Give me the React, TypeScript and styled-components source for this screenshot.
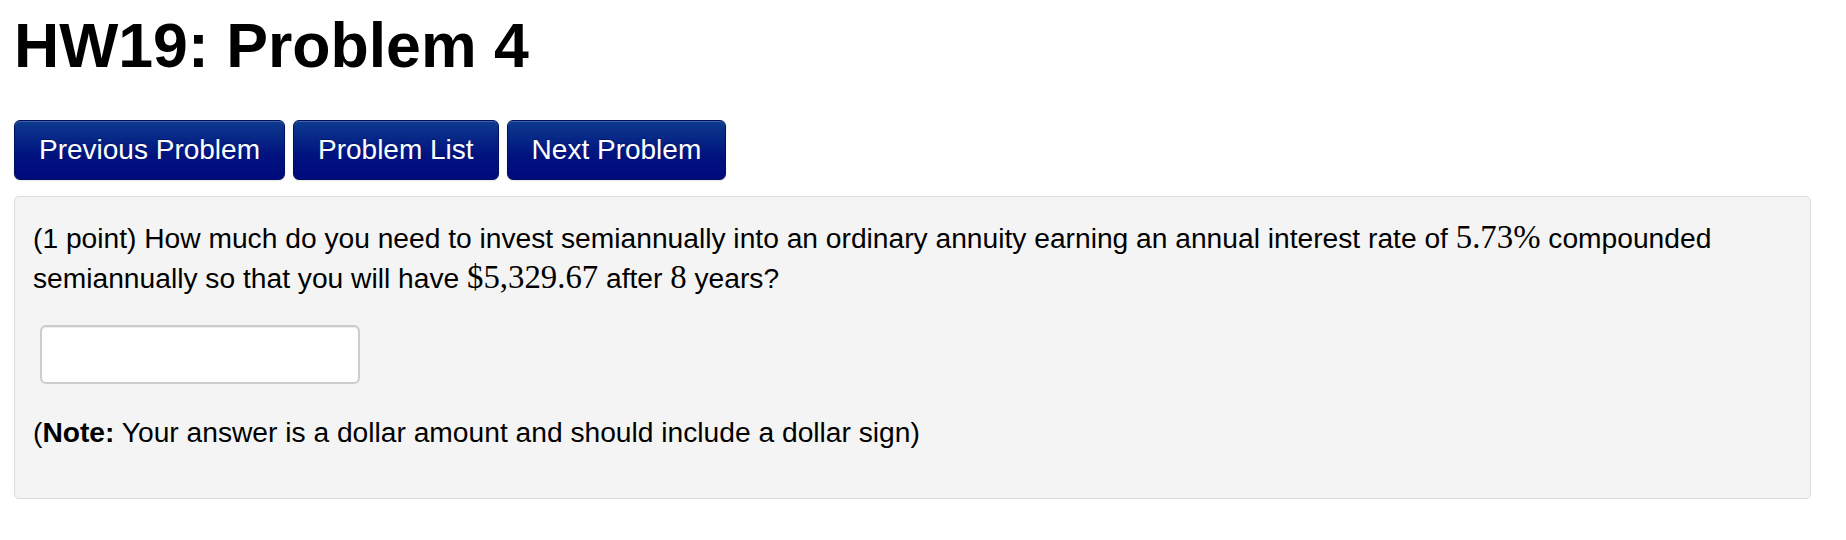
import React from 'react'
import styled, { createGlobalStyle } from 'styled-components'

const GlobalStyle = createGlobalStyle`
  html, body {
    margin: 0;
    padding: 0;
    background: #fff;
  }
  body {
    font-family: "Liberation Sans", Arial, Helvetica, sans-serif;
    color: #000;
  }
`

const App = () => {
  return (
    <>
      <GlobalStyle />
      <Page>
        <Title>HW19: Problem 4</Title>
        <NavBar>
          <NavButton type="button">Previous Problem</NavButton>
          <NavButton type="button">Problem List</NavButton>
          <NavButton type="button">Next Problem</NavButton>
        </NavBar>
        <ProblemBox>
          <Question>
            (1 point) How much do you need to invest semiannually into an ordinary annuity
            earning an annual interest rate of <MathText>5.73%</MathText> compounded
            semiannually so that you will have <MathText>$5,329.67</MathText> after{' '}
            <MathText>8</MathText> years?
          </Question>
          <AnswerInput type="text" />
          <Note>
            (<b>Note:</b> Your answer is a dollar amount and should include a dollar sign)
          </Note>
        </ProblemBox>
      </Page>
    </>
  )
}

export default App

const Page = styled.div`
  padding: 10px 35px 40px 14px;
`

const Title = styled.h1`
  margin: 0;
  font-family: "Liberation Sans", Arial, sans-serif;
  font-weight: 700;
  font-size: 62.6px;
  line-height: 71px;
`

const NavBar = styled.div`
  display: flex;
  gap: 8px;
  margin-top: 39px;
`

const NavButton = styled.button`
  height: 60px;
  padding: 0 24px;
  border: 1px solid #00105e;
  border-radius: 6px;
  background: linear-gradient(to bottom, #0d3b8e 0%, #00127f 60%, #000a7c 100%);
  box-shadow: inset 0 1px 0 rgba(255, 255, 255, 0.2), 0 1px 2px rgba(0, 0, 0, 0.1);
  color: #fff;
  font-family: "Liberation Sans", Arial, sans-serif;
  font-size: 28px;
  text-shadow: 0 -1px 0 rgba(0, 0, 0, 0.25);
  cursor: pointer;
`

const ProblemBox = styled.div`
  margin-top: 16px;
  padding: 21px 18px 46px 18px;
  background: #f4f4f4;
  border: 1px solid #dddddd;
  border-radius: 5px;
`

const Question = styled.div`
  font-size: 28.2px;
  line-height: 40px;
`

const MathText = styled.span`
  display: inline-block;
  font-family: "Liberation Serif", "Times New Roman", serif;
  font-size: 32.8px;
  line-height: 1;
`

const AnswerInput = styled.input`
  display: block;
  box-sizing: border-box;
  width: 320px;
  height: 59px;
  margin: 27px 0 0 7px;
  padding: 6px 10px;
  border: 2px solid #cccccc;
  border-radius: 6px;
  background: #fff;
  box-shadow: inset 0 1px 1px rgba(0, 0, 0, 0.075);
  font-size: 26px;
  outline: none;
`

const Note = styled.div`
  margin-top: 28px;
  font-size: 28.2px;
  line-height: 40px;

  b {
    font-weight: 700;
  }
`
